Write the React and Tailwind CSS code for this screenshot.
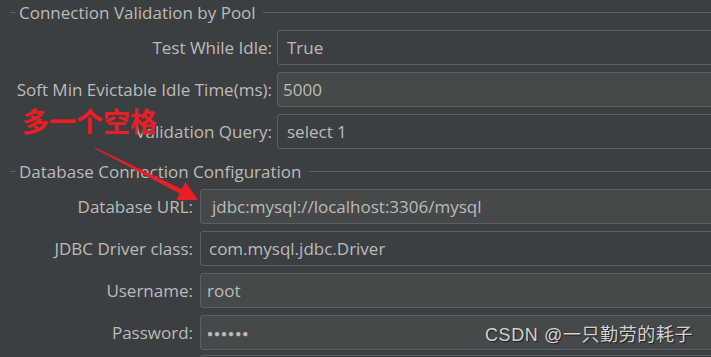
import React from "react";

const font = { fontFamily: "'Open Sans', 'Noto Sans', sans-serif" };

function Title({ text }) {
  return (
    <div className="flex h-[24px] items-center">
      <div className="ml-[10px] h-px w-[6px] bg-[#5e6164]" />
      <span className="ml-[3px] mr-[7px] text-[17px] leading-none text-[#bbbbbb]">{text}</span>
      <div className="h-px flex-1 bg-[#5e6164]" />
    </div>
  );
}

function Row({ label, value, labelW, light, pad, children, extra = "" }) {
  return (
    <div className={`flex h-[35px] shrink-0 items-center ${extra}`}>
      <div
        className={`shrink-0 whitespace-nowrap pr-[5px] text-right text-[17px] leading-none text-[#bbbbbb] ${labelW}`}
      >
        {label}
      </div>
      <div
        className={`flex h-full flex-1 items-center rounded-[3px] border border-[#5e6164] mr-[-10px] ${
          light ? "bg-[#45494a]" : "bg-[#3c3f41]"
        } ${pad}`}
      >
        {children ?? (
          <span className="whitespace-pre text-[17px] leading-none text-[#bbbbbb]">{value}</span>
        )}
      </div>
    </div>
  );
}

export default function App() {
  return (
    <div
      className="relative h-[357px] w-[711px] overflow-hidden bg-[#3c3f41]"
      style={font}
    >
      <Title text="Connection Validation by Pool" />
      <div className="mt-[6px] flex flex-col gap-[7px]">
        <Row label="Test While Idle:" value="True" labelW="w-[277px]" pad="pl-[9px]" />
        <Row label="Soft Min Evictable Idle Time(ms):" value="5000" labelW="w-[277px]" light pad="pl-[5px]" />
        <Row label="Validation Query:" value="select 1" labelW="w-[277px]" pad="pl-[9px]" />
      </div>
      <div className="mt-[10px]">
        <Title text="Database Connection Configuration" />
      </div>
      <div className="mt-[6px] flex flex-col gap-[7px]">
        <Row label="Database URL:" value="jdbc:mysql://localhost:3306/mysql" labelW="w-[200px] pr-[7px]" light pad="pl-[11px]" />
        <Row label="JDBC Driver class:" value="com.mysql.jdbc.Driver" labelW="w-[200px] pr-[7px]" pad="pl-[8px]" />
        <Row label="Username:" value="root" labelW="w-[200px] pr-[7px]" light pad="pl-[6px]" />
        <Row label="Password:" labelW="w-[200px] pr-[7px]" light pad="pl-[6px]">
          <span className="text-[10px] leading-none tracking-[1px] text-[#bbbbbb]">●●●●●●</span>
        </Row>
        <Row label="" value="" labelW="w-[200px] pr-[7px]" pad="pl-[6px]" extra="mt-[-2px]" />
      </div>

      {/* annotation */}
      <div
        className="absolute left-[22px] top-[107px] text-[27px] font-bold leading-none text-[#ee1c25]"
        style={{ fontFamily: "'Noto Sans CJK SC', sans-serif" }}
      >
        多一个空格
      </div>
      <svg className="absolute left-0 top-0" width="711" height="357">
        <polygon
          points="95.2,147.6 183.1,189.8 180.9,194.2 94.8,148.4"
          fill="#ee1c25"
        />
        <polygon points="198,200 185.5,182 176.5,200" fill="#ee1c25" />
      </svg>

      <div
        className="absolute left-[485px] top-[326px] text-[18px] leading-none tracking-[0.6px] text-[#d2d2d2]"
        style={{
          fontFamily: "'Liberation Sans', 'Noto Sans CJK SC', sans-serif",
          textShadow: "1px 1px 1px #1e1e1e",
        }}
      >
        CSDN @一只勤劳的耗子
      </div>
    </div>
  );
}
